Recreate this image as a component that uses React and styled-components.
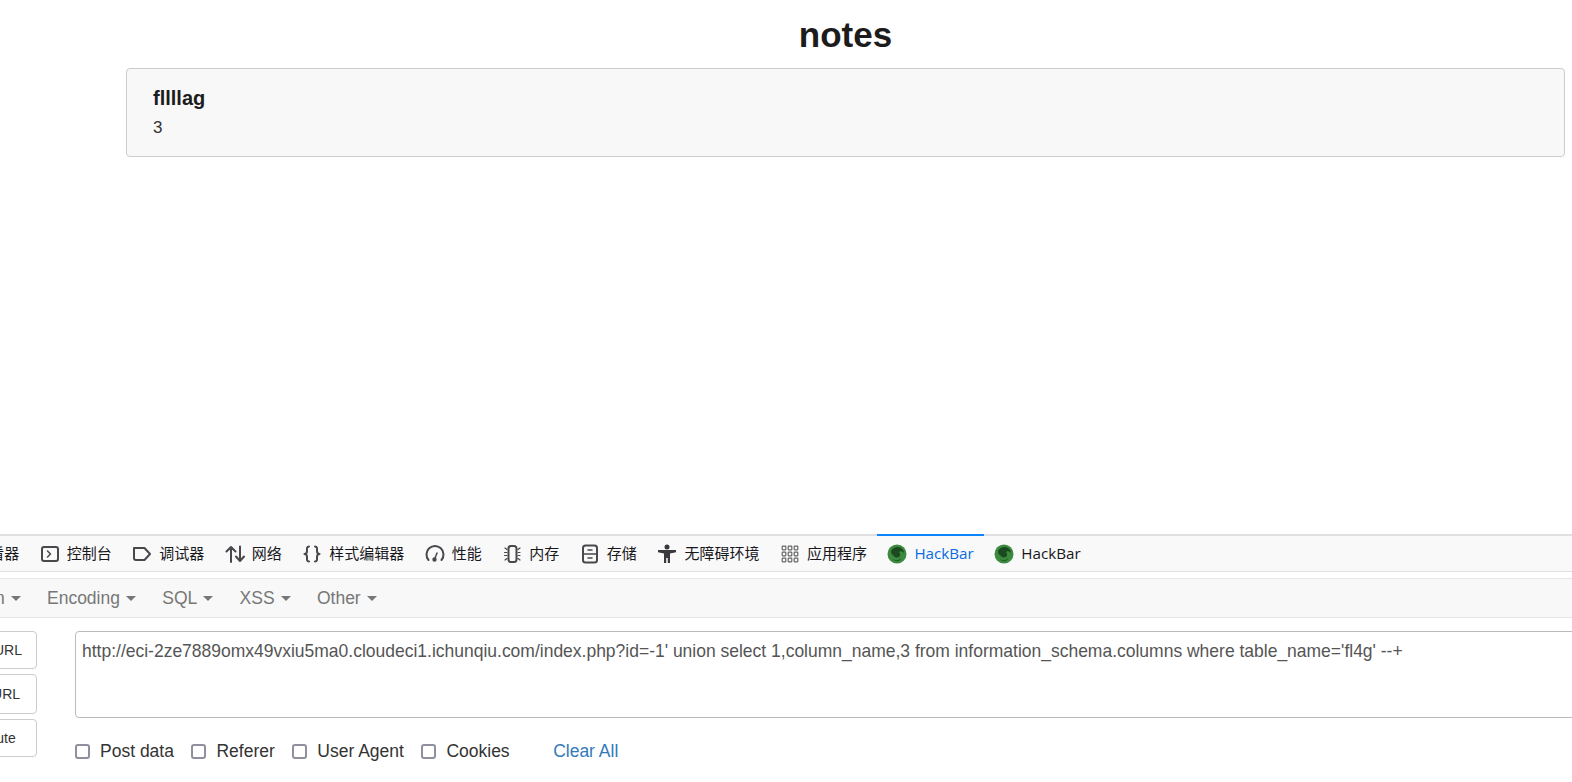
import styled, { createGlobalStyle } from "styled-components";

const GlobalStyle = createGlobalStyle`
  html, body {
    margin: 0;
    height: 100%;
    overflow: hidden;
    background: #fff;
  }
  #root {
    height: 100%;
  }
`;

const Page = styled.div`
  height: 782px;
  display: flex;
  flex-direction: column;
  overflow: hidden;
  font-family: "Liberation Sans", Arial, sans-serif;
`;

const Content = styled.main`
  height: 534px;
  flex: none;
  padding: 0 7px 0 126px;
  box-sizing: border-box;
`;

const Heading = styled.h1`
  margin: 0;
  padding-top: 15px;
  height: 68px;
  box-sizing: border-box;
  font-size: 35px;
  line-height: 40px;
  font-weight: 700;
  color: #1c1c1c;
  text-align: center;
`;

const Note = styled.section`
  height: 89px;
  box-sizing: border-box;
  padding: 18px 26px;
  background: #f8f8f8;
  border: 1px solid #ccc;
  border-radius: 4px;
`;

const NoteTitle = styled.h4`
  margin: 0 0 8px;
  font-size: 20px;
  line-height: 22px;
  font-weight: 700;
  color: #1c1c1c;
`;

const NoteBody = styled.p`
  margin: 0;
  font-size: 17px;
  line-height: 22px;
  color: #333;
`;

const Tabs = styled.nav`
  height: 38px;
  flex: none;
  box-sizing: border-box;
  display: flex;
  align-items: stretch;
  background: #f9f9fa;
  box-shadow: inset 0 2px 0 #e0e0e2;
  border-bottom: 1px solid #e0e0e2;
  font-family: "Noto Sans CJK SC", "Noto Sans", sans-serif;
  font-size: 15px;
  overflow: hidden;
`;

const Tab = styled.div`
  flex: none;
  display: flex;
  align-items: center;
  gap: 7px;
  padding: 0 10.25px;
  margin-left: ${(p) => p.$shift || 0}px;
  color: ${(p) => (p.$active ? "#0a6cdf" : "#18181a")};
  border-top: 2px solid ${(p) => (p.$active ? "#0a84ff" : "transparent")};
  white-space: nowrap;
  svg {
    flex: none;
  }
  span {
    padding-bottom: 2px;
  }
`;

const HackLabel = styled.span`
  font-family: "Open Sans", sans-serif;
  font-size: 15.2px;
`;

const Spacer = styled.div`
  height: 6px;
  flex: none;
`;

const Menu = styled.div`
  height: 40px;
  flex: none;
  box-sizing: border-box;
  display: flex;
  align-items: center;
  gap: 26.3px;
  background: #f8f8f8;
  border-top: 1px solid #e7e7e7;
  border-bottom: 1px solid #e7e7e7;
  overflow: hidden;
`;

const MenuItem = styled.div`
  flex: none;
  display: flex;
  align-items: center;
  gap: 6px;
  font-size: 17.5px;
  color: #777;
  margin-left: ${(p) => p.$shift || 0}px;
  &::after {
    content: "";
    border-top: 5px solid #777;
    border-left: 5px solid transparent;
    border-right: 5px solid transparent;
  }
`;

const Panel = styled.div`
  flex: 1;
  display: flex;
  gap: 38px;
  padding-top: 13px;
  overflow: hidden;
`;

const Buttons = styled.div`
  flex: none;
  width: 93px;
  margin-left: -56px;
  display: flex;
  flex-direction: column;
  gap: 5px;
`;

const Button = styled.button`
  height: ${(p) => p.$h}px;
  padding: 0;
  background: #fff;
  border: 1px solid #ccc;
  border-radius: 4px;
  font-family: inherit;
  font-size: 14px;
  color: #333;
`;

const Main = styled.div`
  flex: none;
  width: 1600px;
`;

const Url = styled.div`
  height: 87px;
  box-sizing: border-box;
  padding: 8px 6px;
  background: #fff;
  border: 1px solid #bbb;
  border-radius: 4px;
  font-size: 17.49px;
  line-height: 22px;
  color: #555;
  white-space: nowrap;
`;

const Options = styled.div`
  display: flex;
  align-items: center;
  height: 24px;
  margin-top: 21px;
`;

const Option = styled.label`
  display: flex;
  align-items: center;
  gap: 10px;
  margin-right: 17.5px;
  font-size: 17.5px;
  color: #333;
`;

const Box = styled.span`
  width: 11px;
  height: 11px;
  border: 2px solid #8f8f9d;
  border-radius: 3px;
  background: #fff;
`;

const ClearAll = styled.a`
  margin-left: 26px;
  font-size: 17.5px;
  color: #337ab7;
`;

const Icon = ({ children, fill }) => (
  <svg
    width="20"
    height="20"
    viewBox="0 0 20 20"
    fill={fill ? "#38383d" : "none"}
    stroke={fill ? "none" : "#48484d"}
    strokeWidth="2"
    strokeLinecap="round"
    strokeLinejoin="round"
  >
    {children}
  </svg>
);

const HackIcon = () => (
  <svg width="20" height="20" viewBox="0 0 20 20">
    <circle cx="10" cy="10" r="9.500" fill="#3b8a3d" />
    <path d="M4 7c2-4 7-5 10-3 2 1 3 3 3 5-2-2-4-2-5-1 1 1 2 3 0 5-3 1-5 0-6-2-1 0-2-2-2-4z" fill="#1c4a20" />
    <path d="M6 15c2 2 6 2 8-1-1 4-6 4-8 1z" fill="#1c4a20" />
  </svg>
);

const tabs = [
  {
    label: "控制台",
    icon: (
      <Icon>
        <rect x="2" y="3" width="16" height="14" rx="2" />
        <path d="M7.500 7l3 3-3 3" strokeWidth="1.500" />
      </Icon>
    ),
  },
  {
    label: "调试器",
    icon: (
      <Icon>
        <path d="M2 4h10.500L18 10l-5.500 6H4a2 2 0 0 1-2-2z" />
      </Icon>
    ),
  },
  {
    label: "网络",
    icon: (
      <Icon>
        <path d="M6 18V3M1.500 7.500L6 3l4.500 4.500M15 2.500V17M11 12.500l4 4.500 4-4.500" />
      </Icon>
    ),
  },
  {
    label: "样式编辑器",
    icon: (
      <Icon>
        <path d="M7 2.500C4.500 2.500 5 5 5 7c0 2-1 3-2.500 3C4 10 5 11 5 13c0 2-.5 4.500 2 4.500M13 2.500c2.500 0 2 2.500 2 4.500 0 2 1 3 2.500 3-1.500 0-2.500 1-2.500 3 0 2 .5 4.500-2 4.500" />
      </Icon>
    ),
  },
  {
    label: "性能",
    icon: (
      <Icon>
        <path d="M3.500 16a8.500 8.500 0 1 1 13 0" />
        <path d="M9.500 15.500L12 9" strokeWidth="1.500" />
        <circle cx="9.500" cy="15.500" r="1.200" fill="#48484d" />
      </Icon>
    ),
  },
  {
    label: "内存",
    icon: (
      <Icon>
        <rect x="6.500" y="2" width="8" height="16" rx="2.500" />
        <path d="M3 4l2 1.500M2.500 8.500H5M2.500 11.500H5M3 16l2-1.500M16 5.500L18 4M16 8.500h2M16 11.500h2M16 14.500l2 1.500" strokeWidth="1.200" />
      </Icon>
    ),
  },
  {
    label: "存储",
    icon: (
      <Icon>
        <rect x="3" y="1.500" width="14" height="17" rx="2.500" />
        <path d="M3 10h14M8 6h4M8 14h4" strokeWidth="1.500" />
      </Icon>
    ),
  },
  {
    label: "无障碍环境",
    icon: (
      <Icon fill>
        <circle cx="10" cy="3" r="2.500" />
        <path d="M1 6h18v2.200l-6 1.300V19h-2.200v-5H9.200v5H7V9.500L1 8.200z" />
      </Icon>
    ),
  },
  {
    label: "应用程序",
    icon: (
      <Icon>
        {[4, 10, 16].map((y) =>
          [4, 10, 16].map((x) => (
            <rect key={`${x}-${y}`} x={x - 1.800} y={y - 1.800} width="3.600" height="3.600" rx="0.500" strokeWidth="1.200" stroke="#666" />
          )),
        )}
      </Icon>
    ),
  },
];

const options = ["Post data", "Referer", "User Agent", "Cookies"];

const App = () => {
  return (
    <>
      <GlobalStyle />
      <Page>
        <Content>
          <Heading>notes</Heading>
          <Note>
            <NoteTitle>fllllag</NoteTitle>
            <NoteBody>3</NoteBody>
          </Note>
        </Content>
        <Tabs>
          <Tab $shift={-36}>
            <span>查看器</span>
          </Tab>
          {tabs.map((t) => (
            <Tab key={t.label}>
              {t.icon}
              <span>{t.label}</span>
            </Tab>
          ))}
          <Tab $active>
            <HackIcon />
            <HackLabel>HackBar</HackLabel>
          </Tab>
          <Tab>
            <HackIcon />
            <HackLabel>HackBar</HackLabel>
          </Tab>
        </Tabs>
        <Spacer />
        <Menu>
          <MenuItem $shift={-78}>Encryption</MenuItem>
          <MenuItem>Encoding</MenuItem>
          <MenuItem>SQL</MenuItem>
          <MenuItem>XSS</MenuItem>
          <MenuItem>Other</MenuItem>
        </Menu>
        <Panel>
          <Buttons>
            <Button $h={38}>Load URL</Button>
            <Button $h={40}>Split URL</Button>
            <Button $h={38}>Execute</Button>
          </Buttons>
          <Main>
            <Url>
              http://eci-2ze7889omx49vxiu5ma0.cloudeci1.ichunqiu.com/index.php?id=-1' union select 1,column_name,3 from information_schema.columns where table_name='fl4g' --+
            </Url>
            <Options>
              {options.map((o) => (
                <Option key={o}>
                  <Box />
                  {o}
                </Option>
              ))}
              <ClearAll>Clear All</ClearAll>
            </Options>
          </Main>
        </Panel>
      </Page>
    </>
  );
};

export default App;
